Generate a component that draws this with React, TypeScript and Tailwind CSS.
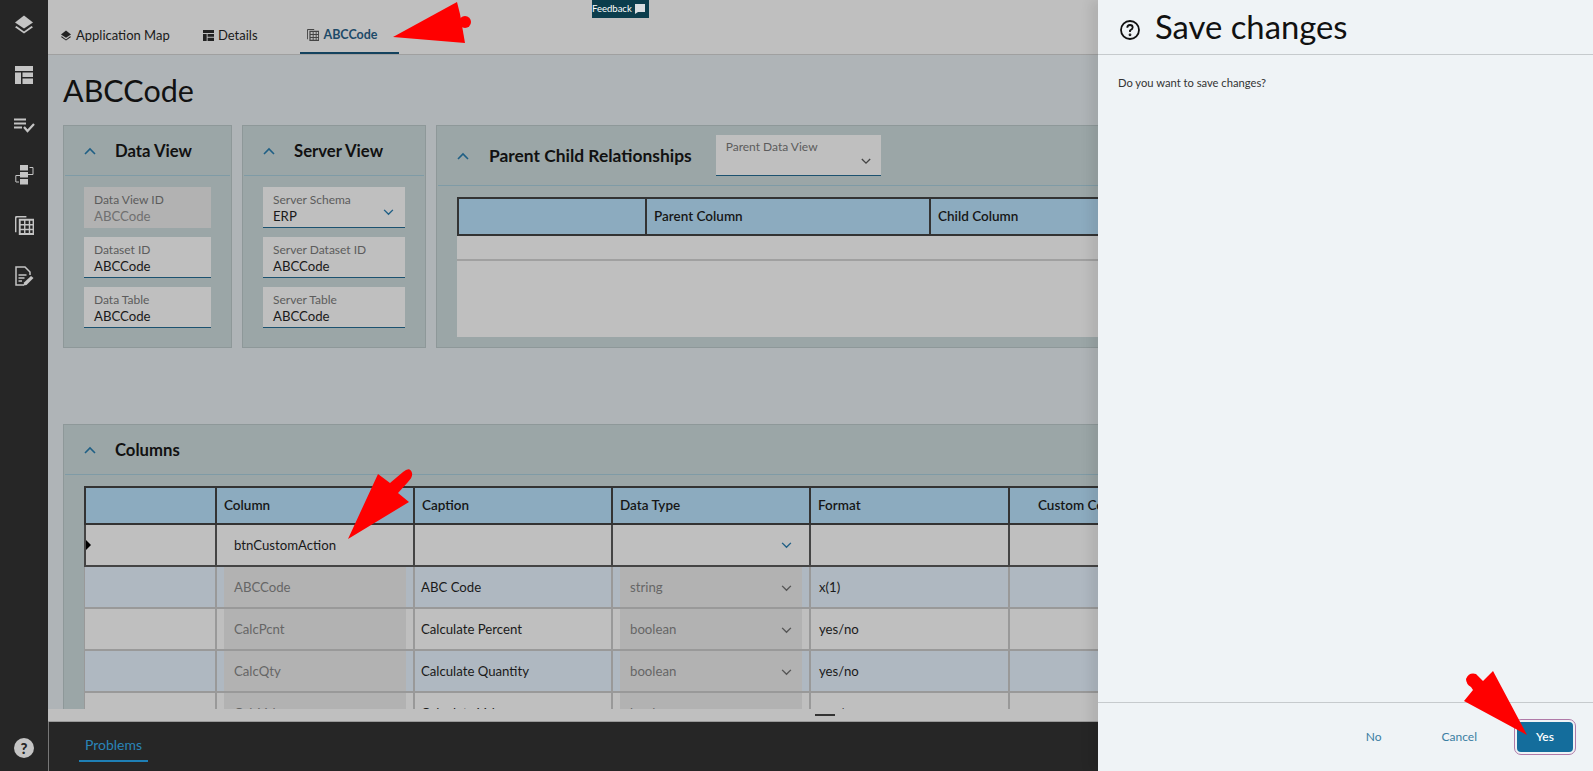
const font = { fontFamily: 'Lato, "Noto Sans", sans-serif' };

function LayersIcon({ className }: { className?: string }) {
  return (
    <svg viewBox="0 0 18 18" className={className} fill="currentColor">
      <path d="M9 0 18 7 9 13 0 7z" />
      <path d="M1.500 10.500 9 16 16.500 10.500 18 11.800 9 18 0 11.800z" />
    </svg>
  );
}

function LayoutIcon({ className }: { className?: string }) {
  return (
    <svg viewBox="0 0 18 18" className={className} fill="currentColor">
      <path d="M0 0h18v5H0zM0 6.500h6V18H0zM7.500 6.500H18V11H7.500zM7.500 12.500H18V18H7.500z" />
    </svg>
  );
}

function TableStackIcon({ className }: { className?: string }) {
  return (
    <svg viewBox="0 0 20 20" className={className} fill="currentColor">
      <path d="M0 1.500Q0 0 1.500 0H12v1.500H2.500Q1.500 1.500 1.500 2.500V17H0z" />
      <path fillRule="evenodd" d="M4 3h16v17H4zM6 5v3.500h3.500V5zM11 5v3.500h3.500V5zM16 5v3.500h2.500V5zM6 10v3.500h3.500V10zM11 10v3.500h3.500V10zM16 10v3.500h2.500V10zM6 15v3h3.500v-3zM11 15v3h3.500v-3zM16 15v3h2.500v-3z" />
    </svg>
  );
}

function Chevron({ up, className }: { up?: boolean; className?: string }) {
  return (
    <svg viewBox="0 0 12 8" className={className} fill="none" stroke="currentColor" strokeWidth="1.600">
      <path d={up ? 'M1 7 6 2 11 7' : 'M1 1 6 6 11 1'} />
    </svg>
  );
}

function Sidebar() {
  return (
    <div className="w-12 shrink-0 bg-[#262626] flex flex-col items-center text-[#c4c4c4] relative">
      <LayersIcon className="w-[18px] h-[19px] mt-[15px]" />
      <LayoutIcon className="w-[18px] h-[18px] mt-[32px]" />
      <svg viewBox="0 0 21 15" className="w-[21px] h-[15px] mt-[34px]" fill="none" stroke="currentColor">
        <path d="M0 1.500h12M0 5.500h12M0 9.500h8" strokeWidth="1.800" />
        <path d="M10 9 13.500 13 20 6" strokeWidth="2.200" />
      </svg>
      <svg viewBox="0 0 19 20" className="w-[19px] h-5 mt-[32px]" fill="currentColor">
        <path d="M5 0h8v5.500H5zM5 7h8v5.500H5zM5 14h8v5.500H5z" />
        <path d="M14.500 2.500h3.500v7h-5M0.800 17V10.500H5M1 17h3" fill="none" stroke="currentColor" strokeWidth="1" />
      </svg>
      <TableStackIcon className="w-[19px] h-[19px] mt-[31px]" />
      <svg viewBox="0 0 19 20" className="w-[19px] h-5 mt-[31px]" fill="none" stroke="currentColor" strokeWidth="1.500">
        <path d="M9 19H1V1h9l5 5v3" />
        <path d="M3.500 9h8M3.500 12h6M3.500 15h3.500" strokeWidth="1.300" />
        <path d="M8.500 19.500 9 16.500 16 10 18.500 12 11.500 19z" fill="currentColor" stroke="none" />
      </svg>
      <div className="mt-auto mb-[13px] w-5 h-5 rounded-full bg-[#c4c4c4] text-[#262626] flex items-center justify-center text-[15px] font-black leading-none">
        ?
      </div>
    </div>
  );
}

function Tabs() {
  return (
    <div className="h-[55px] shrink-0 bg-[#bfbfbf] border-b border-[#a0a0a0] flex items-end text-[13px] text-[#1a1a1a]">
      <div className="ml-[13px] w-[129px] h-[47px] flex items-center gap-[5px] pt-[10px]">
        <LayersIcon className="w-[10px] h-[11px] text-[#222]" />
        <span>Application Map</span>
      </div>
      <div className="ml-[13px] w-[99px] h-[47px] flex items-center gap-[4px] pt-[10px]">
        <LayoutIcon className="w-[11px] h-[11px] text-[#222]" />
        <span>Details</span>
      </div>
      <div className="w-[99px] h-[47px] flex items-center justify-center gap-[4px] border-b-[2px] border-[#13425e] text-[12.500px] text-[#1d4a68] font-bold ml-[-2px] pt-[11px] pr-[14px]">
        <TableStackIcon className="w-[12px] h-[12px] text-[#444]" />
        <span>ABCCode</span>
      </div>
    </div>
  );
}

function Field({ label, value, disabled, select }: { label: string; value: string; disabled?: boolean; select?: boolean }) {
  return (
    <div className={`h-[41px] px-[10px] pt-[6px] relative ${disabled ? 'bg-[#b2b2b2]' : 'bg-[#bfbfbf] border-b border-[#1c5270]'}`}>
      <div className="text-[12px] leading-[14px] text-[#5c5c5c]">{label}</div>
      <div className={`text-[13.200px] leading-[19px] ${disabled ? 'text-[#707070]' : 'text-[#1a1a1a]'}`}>{value}</div>
      {select && <Chevron className="w-[11px] h-[7px] absolute right-[11px] top-[22px] text-[#1f5f85]" />}
    </div>
  );
}

function SmallPanel({ title, width, fields }: { title: string; width: string; fields: React.ReactNode }) {
  return (
    <div className={`${width} h-[223px] shrink-0 bg-[#9ba6a7] border border-[#8e9899]`}>
      <div className="h-[50px] border-b border-[#7f9ba6] flex items-center mx-px pl-[19px]">
        <Chevron up className="w-[12px] h-[8px] text-[#1f5f85]" />
        <span className="ml-[19px] pt-[2px] text-[16.700px] font-bold text-[#111]">{title}</span>
      </div>
      <div className="pt-[11px] px-[20px] flex flex-col gap-[9px]">{fields}</div>
    </div>
  );
}

function HeadCell({ width, children, first }: { width: string; children?: React.ReactNode; first?: boolean }) {
  return (
    <div className={`${width} shrink-0 h-full flex items-center pl-[7px] text-[13.500px] font-semibold text-[#161616] border-[#333] ${first ? 'border-x-2' : 'border-r-2'}`}>
      {children}
    </div>
  );
}

function RelationshipsPanel() {
  return (
    <div className="w-[800px] h-[223px] shrink-0 bg-[#9ba6a7] border border-[#8e9899]">
      <div className="h-[60px] border-b border-[#7f9ba6] flex items-center mx-px pl-[19px]">
        <Chevron up className="w-[12px] h-[8px] text-[#1f5f85]" />
        <span className="ml-[20px] pt-[2px] text-[17.400px] font-bold text-[#111]">Parent Child Relationships</span>
        <div className="ml-[24px] w-[165px] h-[41px] bg-[#bfbfbf] border-b border-[#1c5270] px-[10px] pt-[5px] relative">
          <div className="text-[12px] leading-[14px] text-[#5c5c5c]">Parent Data View</div>
          <Chevron className="w-[10px] h-[7px] absolute right-[10px] top-[23px] text-[#444]" />
        </div>
      </div>
      <div className="pl-[20px] pt-[11px]">
        <div className="h-[39px] bg-[#8cabbf] border-y-2 border-[#333] flex">
          <HeadCell width="w-[190px]" first />
          <HeadCell width="w-[284px]">Parent Column</HeadCell>
          <HeadCell width="w-[284px]">Child Column</HeadCell>
        </div>
        <div className="h-[25px] bg-[#bfbfbf] border-b-2 border-[#a0a0a0]" />
        <div className="h-[76px] bg-[#bfbfbf]" />
      </div>
    </div>
  );
}

type Row = { column: string; caption: string; type: string; format: string };

const rows: Row[] = [
  { column: 'ABCCode', caption: 'ABC Code', type: 'string', format: 'x(1)' },
  { column: 'CalcPcnt', caption: 'Calculate Percent', type: 'boolean', format: 'yes/no' },
  { column: 'CalcQty', caption: 'Calculate Quantity', type: 'boolean', format: 'yes/no' },
  { column: 'CalcValue', caption: 'Calculate Value', type: 'boolean', format: 'yes/no' },
];

function DataRow({ row, index }: { row: Row; index: number }) {
  const cell = 'shrink-0 h-full border-r-2 border-[#999]';
  return (
    <div className={`h-[42px] flex border-b-2 border-[#999] text-[13.200px] ${index % 2 === 0 ? 'bg-[#afb8c1]' : 'bg-[#bfbfbf]'}`}>
      <div className={`${cell} w-[133px] border-l border-l-[#999]`} />
      <div className={`${cell} w-[198px] px-[7px]`}>
        <div className="h-full bg-[#b2b2b2] pl-[10px] pt-[2px] flex items-center text-[#666]">{row.column}</div>
      </div>
      <div className={`${cell} w-[198px] pl-[6px] pt-[2px] flex items-center text-[#1a1a1a]`}>{row.caption}</div>
      <div className={`${cell} w-[198px] pl-[7px] pr-[7px]`}>
        <div className="h-full bg-[#b2b2b2] pl-[10px] pr-[10px] pt-[2px] flex items-center justify-between text-[#666]">
          {row.type}
          <Chevron className="w-[11px] h-[7px] text-[#555]" />
        </div>
      </div>
      <div className={`${cell} w-[199px] pl-[8px] pt-[2px] flex items-center text-[#1a1a1a]`}>{row.format}</div>
      <div className={`${cell} w-[199px]`} />
    </div>
  );
}

function ColumnsPanel() {
  return (
    <div className="w-[1300px] h-[400px] bg-[#9ba6a7] border border-[#8e9899]">
      <div className="h-[50px] border-b border-[#7f9ba6] flex items-center mx-px pl-[19px]">
        <Chevron up className="w-[12px] h-[8px] text-[#1f5f85]" />
        <span className="ml-[19px] pt-[3px] text-[16.700px] font-bold text-[#111]">Columns</span>
      </div>
      <div className="pl-[20px] pt-[11px]">
        <div className="h-[39px] bg-[#8cabbf] border-y-2 border-[#333] flex">
          <HeadCell width="w-[133px]" first />
          <HeadCell width="w-[198px]">Column</HeadCell>
          <HeadCell width="w-[198px]">Caption</HeadCell>
          <HeadCell width="w-[198px]">Data Type</HeadCell>
          <HeadCell width="w-[199px]">Format</HeadCell>
          <HeadCell width="w-[199px]"><span className="pl-[21px]">Custom Control</span></HeadCell>
        </div>
        <div className="h-[42px] flex bg-[#bfbfbf] border-b-2 border-[#444] text-[13.200px] text-[#1a1a1a]">
          <div className="w-[133px] shrink-0 h-full border-x-2 border-[#444] flex items-center">
            <div className="border-y-[5px] border-l-[5px] border-y-transparent border-l-black" />
          </div>
          <div className="w-[198px] shrink-0 h-full border-r-2 border-[#444] pl-[17px] pt-[2px] flex items-center">btnCustomAction</div>
          <div className="w-[198px] shrink-0 h-full border-r-2 border-[#444]" />
          <div className="w-[198px] shrink-0 h-full border-r-2 border-[#444] flex items-center justify-end pr-[17px]">
            <Chevron className="w-[11px] h-[7px] text-[#1f5f85]" />
          </div>
          <div className="w-[199px] shrink-0 h-full border-r-2 border-[#444]" />
          <div className="w-[199px] shrink-0 h-full border-r-2 border-[#444]" />
        </div>
        {rows.map((row, i) => (
          <DataRow key={row.column} row={row} index={i} />
        ))}
      </div>
    </div>
  );
}

function SavePanel() {
  return (
    <div className="absolute top-0 right-0 bottom-0 w-[495px] bg-[#eff3f6] flex flex-col shadow-[-8px_0_10px_rgba(0,0,0,0.08)]">
      <div className="h-[55px] shrink-0 border-b border-[#c6cacd] flex items-center pl-[22px]">
        <svg viewBox="0 0 20 20" className="w-[20px] h-[20px] mt-[6px] text-[#111]" fill="none" stroke="currentColor" strokeWidth="1.800">
          <circle cx="10" cy="10" r="9" />
          <path d="M7.300 7.800Q7.300 5 10 5T12.700 7.500Q12.700 9 10 10.500V12" />
          <circle cx="10" cy="14.800" r="0.500" />
        </svg>
        <span className="ml-[15px] text-[32.800px] text-[#111]">Save changes</span>
      </div>
      <div className="flex-1 pl-[20px] pt-[20px] text-[11.200px] text-[#333]">Do you want to save changes?</div>
      <div className="h-[69px] shrink-0 border-t border-[#c6cacd] flex items-center justify-end text-[12px] text-[#3b7ea3]">
        <span className="mr-[60px]">No</span>
        <span className="mr-[40px]">Cancel</span>
        <button className="w-[56px] h-[30px] mr-[20px] rounded-[4px] bg-[#146d9c] text-white font-semibold outline outline-1 outline-offset-2 outline-[#b07aa8]">
          Yes
        </button>
      </div>
    </div>
  );
}

function Arrows() {
  return (
    <svg viewBox="0 0 1593 771" className="absolute inset-0 w-[1593px] h-[771px] pointer-events-none" fill="#ff0000">
      <path d="M393 37 457 2 460 14 465 43z" />
      <circle cx="465" cy="22" r="6" />
      <path d="M348 539 378 474 390 483 403 472Q410 466 412 473 413 477 408 482L398 493 409 502z" />
      <path d="M1527 735 1493 671 1483 681 1476 674Q1469 672 1466 679 1466 684 1471 687L1473 690 1464 701z" />
    </svg>
  );
}

export default function App() {
  return (
    <div className="w-[1593px] h-[771px] relative overflow-hidden flex bg-[#262626]" style={font}>
      <Sidebar />
      <div className="flex-1 min-w-0 flex flex-col">
        <div className="h-[722px] shrink-0 bg-[#afb4b7] border-b border-[#999] flex flex-col overflow-hidden">
          <Tabs />
          <div className="h-[654px] shrink-0 overflow-hidden pl-[15px]">
            <h1 className="text-[30.500px] leading-[40px] text-[#111] mt-[15px]">ABCCode</h1>
            <div className="flex gap-[10px] mt-[15px]">
              <SmallPanel
                title="Data View"
                width="w-[169px]"
                fields={
                  <>
                    <Field label="Data View ID" value="ABCCode" disabled />
                    <Field label="Dataset ID" value="ABCCode" />
                    <Field label="Data Table" value="ABCCode" />
                  </>
                }
              />
              <SmallPanel
                title="Server View"
                width="w-[184px]"
                fields={
                  <>
                    <Field label="Server Schema" value="ERP" select />
                    <Field label="Server Dataset ID" value="ABCCode" />
                    <Field label="Server Table" value="ABCCode" />
                  </>
                }
              />
              <RelationshipsPanel />
            </div>
            <div className="mt-[76px]">
              <ColumnsPanel />
            </div>
          </div>
          <div className="flex-1 bg-[#bfbfbf] flex justify-center pt-[5px]">
            <div className="w-5 h-[2px] bg-[#333] ml-[8px]" />
          </div>
        </div>
        <div className="flex-1 border-l border-[#777] pl-[30px]">
          <div className="w-[69px] h-[40px] pt-[6px] border-b-2 border-[#1e7fb5] flex items-center justify-center text-[14px] text-[#2a84b8]">
            Problems
          </div>
        </div>
      </div>
      <div className="absolute top-0 left-[592px] w-[57px] h-[18px] bg-[#0b3d4c] text-white text-[9.500px] flex items-center gap-[3px]">
        Feedback
        <svg viewBox="0 0 10 10" className="w-[10px] h-[10px]" fill="#d8dde0">
          <path d="M0 0h10v8H3L0 10z" />
        </svg>
      </div>
      <SavePanel />
      <Arrows />
    </div>
  );
}
